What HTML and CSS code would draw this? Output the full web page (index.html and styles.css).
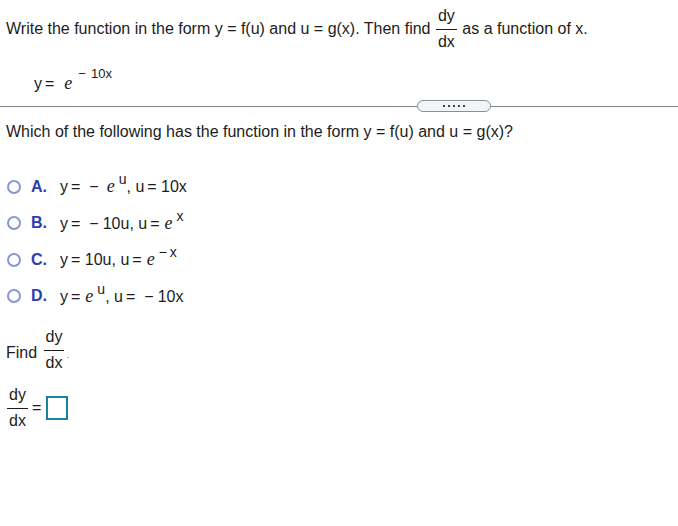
FILE: index.html
```html
<!DOCTYPE html>
<html>
<head>
<meta charset="utf-8">
<link rel="stylesheet" href="styles.css">
</head>
<body>
<div class="page">
  <div class="intro">Write the function in the form y = f(u) and u = g(x). Then find <span class="frac"><span class="num">dy</span><span class="den">dx</span></span> as a function of x.</div>
  <div class="given">y<span class="s3"></span>=<span class="s10"></span><span class="e">e</span><sup class="sup sup-big"><span class="m">&#8722;</span>10x</sup></div>
  <div class="sep">
    <div class="line"></div>
    <div class="pill"><span class="dot"></span><span class="dot"></span><span class="dot"></span><span class="dot"></span><span class="dot"></span></div>
    <div class="line short"></div>
  </div>
  <div class="question">Which of the following has the function in the form y = f(u) and u = g(x)?</div>
  <div class="options">
    <div class="opt"><span class="radio"></span><span class="lbl">A.</span><span class="expr">y<span class="s3"></span>=<span class="s9"></span>&#8722;<span class="s8"></span><span class="e">e</span><sup class="sup">u</sup>, u<span class="s3"></span>= 10x</span></div>
    <div class="opt"><span class="radio"></span><span class="lbl">B.</span><span class="expr">y<span class="s3"></span>=<span class="s9"></span>&#8722;<span class="s4"></span>10u, u<span class="s3"></span>=<span class="s5"></span><span class="e">e</span><sup class="sup">x</sup></span></div>
    <div class="opt"><span class="radio"></span><span class="lbl">C.</span><span class="expr">y<span class="s3"></span>= 10u, u<span class="s3"></span>=<span class="s5"></span><span class="e">e</span><sup class="sup"><span class="m">&#8722;</span>x</sup></span></div>
    <div class="opt"><span class="radio"></span><span class="lbl">D.</span><span class="expr">y<span class="s3"></span>=<span class="s5"></span><span class="e">e</span><sup class="sup">u</sup>, u<span class="s3"></span>=<span class="s9"></span>&#8722;<span class="s4"></span>10x</span></div>
  </div>
  <div class="find">Find <span class="frac frac-find"><span class="num">dy</span><span class="den">dx</span></span><span class="period">.</span></div>
  <div class="answer">
    <span class="frac frac-ans"><span class="num">dy</span><span class="den">dx</span></span>
    <span class="eq">=</span>
    <span class="box"></span>
  </div>
</div>
</body>
</html>
```
FILE: styles.css
```css
html, body {
  margin: 0;
  padding: 0;
  background: #ffffff;
}
body {
  font-family: "Liberation Sans", Arial, sans-serif;
  font-size: 16px;
  color: #1c1c1c;
}
.page {
  padding: 8px 6px 0;
}
.intro {
  line-height: 16px;
  white-space: nowrap;
}
.frac {
  display: inline-flex;
  flex-direction: column;
  align-items: stretch;
  text-align: center;
  line-height: 16px;
  vertical-align: 13px;
  margin: 0 1px;
}
.frac .num {
  border-bottom: 1px solid #1c1c1c;
  padding: 0 2px 5px;
}
.frac .den {
  padding-top: 4px;
}
.frac-find {
  vertical-align: 16px;
  margin-left: 2px;
}
.period {
  font-size: 9px;
  color: #666;
  margin-left: 1px;
}
.given {
  padding-left: 28px;
  margin-top: 23px;
  height: 20px;
  line-height: 20px;
}
.e {
  font-family: "Liberation Serif", "Times New Roman", serif;
  font-style: italic;
  font-size: 18px;
}
.s3, .s4, .s5, .s8, .s9, .s10 {
  display: inline-block;
}
.s3 { width: 3px; }
.s4 { width: 4px; }
.s5 { width: 5px; }
.s8 { width: 8px; }
.s9 { width: 9px; }
.s10 { width: 10px; }
.sup {
  font-size: 14px;
  vertical-align: 8px;
  line-height: 0;
  margin-left: 4px;
}
.sup-big {
  font-size: 13px;
  vertical-align: 11px;
  margin-left: 6px;
}
.sup .m {
  margin-right: 3px;
}
.sup-big .m {
  margin-right: 5px;
}
.sep {
  display: flex;
  align-items: center;
  margin: 6px -6px 0;
  height: 14px;
}
.line {
  flex: 1;
  height: 1px;
  background: #80868d;
}
.line.short {
  flex: 0 0 187px;
}
.pill {
  width: 72px;
  height: 10px;
  border: 1px solid #8a9098;
  border-radius: 7px;
  background: #f3f4f6;
  display: flex;
  align-items: center;
  justify-content: center;
  gap: 3px;
}
.dot {
  width: 2px;
  height: 2px;
  background: #3f444b;
}
.question {
  margin-top: 9px;
  line-height: 20px;
}
.options {
  margin-top: 34px;
  display: flex;
  flex-direction: column;
  gap: 15.5px;
}
.opt {
  display: flex;
  align-items: center;
  height: 21px;
}
.radio {
  width: 14px;
  height: 14px;
  border: 2px solid #8796d6;
  border-radius: 50%;
  margin-left: 1px;
  box-sizing: border-box;
}
.lbl {
  color: #2e3db2;
  font-weight: bold;
  margin-left: 10px;
  width: 29px;
}
.expr {
  white-space: nowrap;
  line-height: 21px;
}
.find {
  margin-top: 22px;
  line-height: 16px;
}
.answer {
  margin-top: 16px;
  display: flex;
  align-items: center;
  gap: 4px;
}
.frac-ans {
  margin: 0 0 0 1px;
  vertical-align: 0;
}
.eq {
  line-height: 16px;
}
.box {
  width: 22px;
  height: 24px;
  border: 2px solid #1b7f9f;
  box-sizing: border-box;
  margin-left: 1px;
}
```
